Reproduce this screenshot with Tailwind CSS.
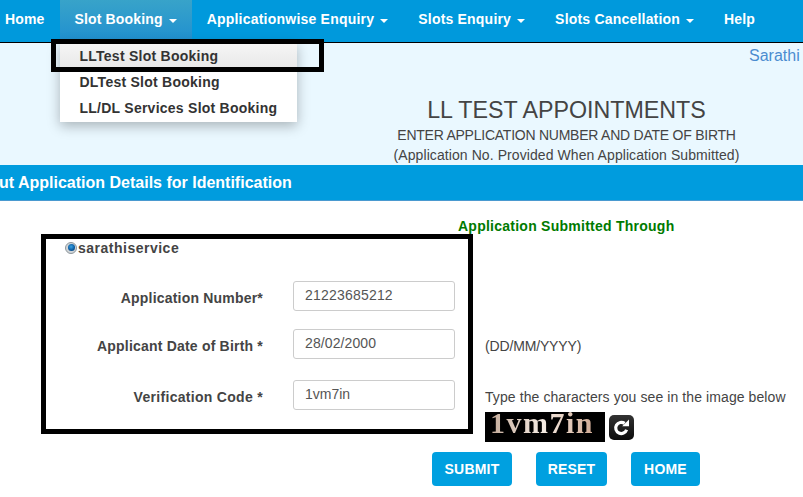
<!DOCTYPE html>
<html lang="en">
<head>
    <meta charset="UTF-8">
    <title>LL Test Appointments</title>
    <script src="https://cdn.jsdelivr.net/npm/@tailwindcss/browser@4"></script>
</head>
<body class="relative w-[803px] h-[497px] overflow-hidden bg-white font-['Liberation_Sans',Arial,sans-serif] text-[14px] text-[#444]">
    <!-- top nav -->
    <nav class="relative flex h-[43px] bg-[#0099dc] border-b border-black text-white font-bold tracking-[0.15px]">
        <a class="flex items-center pl-[5px] pr-[15px] pb-[3px]">Home</a>
        <div class="relative">
            <a class="flex items-center gap-[6px] h-[42px] px-[15px] pb-[3px] bg-gradient-to-b from-[#38a3c9] to-[#1f8fd0]">Slot Booking <span class="mt-[2px] border-x-[4px] border-t-[4px] border-x-transparent border-t-white"></span></a>
            <div class="absolute left-0 top-[42px] w-[237px] bg-white pt-[1px] pb-[1px] text-[#333] tracking-[0.25px] shadow-[0_4px_12px_rgba(0,0,0,0.28)] z-10">
                <a class="block h-[26px] pl-[20px] leading-[26px] bg-gradient-to-b from-[#f6f6f6] to-[#e8e8e8]">LLTest Slot Booking</a>
                <a class="block h-[26px] pl-[20px] leading-[26px]">DLTest Slot Booking</a>
                <a class="block h-[26px] pl-[20px] leading-[26px]">LL/DL Services Slot Booking</a>
            </div>
        </div>
        <a class="flex items-center gap-[6px] pl-[15px] pr-[15px] pb-[3px] tracking-[0.22px]">Applicationwise Enquiry <span class="mt-[2px] border-x-[4px] border-t-[4px] border-x-transparent border-t-white"></span></a>
        <a class="flex items-center gap-[6px] px-[15px] pb-[3px] tracking-[0.2px]">Slots Enquiry <span class="mt-[2px] border-x-[4px] border-t-[4px] border-x-transparent border-t-white"></span></a>
        <a class="flex items-center gap-[6px] px-[15px] pb-[3px] tracking-[0.2px]">Slots Cancellation <span class="mt-[2px] border-x-[4px] border-t-[4px] border-x-transparent border-t-white"></span></a>
        <a class="flex items-center px-[15px] pb-[3px]">Help</a>
    </nav>

    <!-- heading -->
    <header class="h-[122px] bg-[#eaf8ff] overflow-hidden">
        <p class="pl-[749px] pt-[3px] text-[16px] leading-[20px] text-[#4a8cd0] whitespace-nowrap">Sarathi</p>
        <div class="ml-[330px] w-[473px] pt-[29px] text-center">
            <h1 class="text-[23.25px] leading-[30px] text-[#444]">LL TEST APPOINTMENTS</h1>
            <p class="leading-[20px] tracking-[-0.24px]">ENTER APPLICATION NUMBER AND DATE OF BIRTH</p>
            <p class="leading-[20px] tracking-[0.08px]">(Application No. Provided When Application Submitted)</p>
        </div>
    </header>

    <!-- section bar -->
    <div class="h-[36px] bg-[#009cde] border-b border-[#4a9ad0] overflow-hidden">
        <h2 class="ml-[-1px] text-[16px] leading-[36px] font-bold text-white whitespace-nowrap">ut Application Details for Identification</h2>
    </div>

    <!-- form -->
    <form class="font-bold">
        <p class="pl-[458px] pt-[17px] leading-[16px] text-[#007a00] tracking-[0.25px]">Application Submitted Through</p>
        <label class="flex items-center pl-[65px] mt-[6px] h-[16px] tracking-[0.5px]">
            <span class="flex items-center justify-center w-[12px] h-[12px] mb-[1px] rounded-full bg-[#d0d5d8] border border-[#8f979c]"><span class="w-[7px] h-[7px] rounded-full bg-[radial-gradient(circle_at_45%_40%,#3aa2e2,#0a5aa0_60%,#10365a)]"></span></span>
            <span class="ml-[1px]">sarathiservice</span>
        </label>
        <div class="flex items-center mt-[25px]">
            <span class="w-[263px] text-right tracking-[0.2px] pt-[4px]">Application Number*</span>
            <input value="21223685212" class="ml-[30px] w-[162px] h-[30px] px-[11px] pb-[2px] border border-[#ccc] rounded-[3px] text-[14px] font-normal tracking-[0.2px] text-[#555]">
        </div>
        <div class="flex items-center mt-[18px]">
            <span class="w-[263px] text-right tracking-[0.2px] pt-[4px]">Applicant Date of Birth *</span>
            <input value="28/02/2000" class="ml-[30px] w-[162px] h-[30px] px-[11px] pb-[2px] border border-[#ccc] rounded-[3px] text-[14px] font-normal tracking-[0.1px] text-[#555]">
            <span class="ml-[30px] pt-[4px] font-normal tracking-[-0.15px]">(DD/MM/YYYY)</span>
        </div>
        <div class="flex items-start mt-[21px]">
            <span class="w-[263px] h-[30px] leading-[30px] text-right tracking-[0.3px] pt-[2px]">Verification Code *</span>
            <input value="1vm7in" class="ml-[30px] w-[162px] h-[30px] px-[11px] pb-[2px] border border-[#ccc] rounded-[3px] text-[14px] font-normal text-[#555]">
            <div class="ml-[30px]">
                <p class="h-[32px] pt-[9px] leading-[16px] font-normal whitespace-nowrap tracking-[0.09px]">Type the characters you see in the image below</p>
                <div class="flex items-center gap-[4px]">
                    <div class="w-[120px] h-[30px] bg-black pl-[5px]">
                        <span class="block w-[106px] h-[30px] font-['Liberation_Serif',serif] font-bold text-[30px] leading-[22px] tracking-[1.5px] text-transparent bg-clip-text bg-gradient-to-r from-[#c4ab9a] via-[#f4ebe3] to-[#cfa891]">1vm7in</span>
                    </div>
                    <span class="flex items-center justify-center w-[25px] h-[25px] rounded-[5px] bg-gradient-to-b from-[#333] to-[#0c0c0c]">
                        <svg width="19" height="19" viewBox="0 0 19 19" fill="none"><path d="M14.6 11.8A5.6 5.6 0 1 1 12.6 5.4" stroke="#fff" stroke-width="3.2"/><path d="M10.2 8.2h6.8V1.6z" fill="#fff"/></svg>
                    </span>
                </div>
            </div>
        </div>
        <div class="flex pl-[432px] mt-[10px] gap-[24px] text-white tracking-[0.2px]">
            <button type="button" class="w-[80px] h-[34px] rounded-[4px] bg-[#00a0e0] font-bold">SUBMIT</button>
            <button type="button" class="w-[71px] h-[34px] rounded-[4px] bg-[#00a0e0] font-bold">RESET</button>
            <button type="button" class="w-[69px] h-[34px] rounded-[4px] bg-[#00a0e0] font-bold">HOME</button>
        </div>
    </form>

    <!-- annotation boxes drawn over the screenshot -->
    <div class="absolute left-[51px] top-[39px] w-[273px] h-[33px] border-[5px] border-black z-20"></div>
    <div class="absolute left-[41px] top-[234px] w-[432px] h-[200px] border-[5px] border-black z-20"></div>
</body>
</html>
